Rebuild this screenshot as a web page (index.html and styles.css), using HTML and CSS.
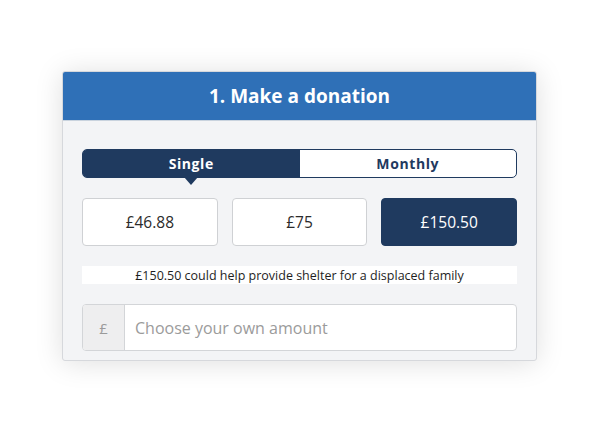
FILE: index.html
```html
<!DOCTYPE html>
<html>
<head>
<meta charset="utf-8">
<link rel="stylesheet" href="styles.css">
</head>
<body>
<div class="card">
  <div class="card-head">1. Make a donation</div>
  <div class="card-body">
    <div class="toggle">
      <div class="tab tab-active">Single</div>
      <div class="tab">Monthly</div>
    </div>
    <div class="amounts">
      <div class="amount">£46.88</div>
      <div class="amount">£75</div>
      <div class="amount amount-active">£150.50</div>
    </div>
    <div class="note">£150.50 could help provide shelter for a displaced family</div>
    <div class="own">
      <div class="own-prefix">£</div>
      <div class="own-field">Choose your own amount</div>
    </div>
  </div>
</div>
</body>
</html>
```
FILE: styles.css
```css
html, body {
  margin: 0;
  padding: 0;
  background: #ffffff;
  width: 600px;
  height: 434px;
  overflow: hidden;
  font-family: "Open Sans", "Liberation Sans", sans-serif;
}
body {
  padding-top: 71px;
  box-sizing: border-box;
}
.card {
  margin-left: 62px;
  width: 475px;
  box-sizing: border-box;
  border: 1px solid #d6d8dc;
  border-radius: 3px;
  background: #f3f4f6;
  box-shadow: 0 2px 28px rgba(0, 0, 0, 0.13);
  overflow: hidden;
}
.card-head {
  height: 48px;
  background: #2f70b7;
  border-bottom: 1px solid #c9d3de;
  color: #ffffff;
  font-weight: 700;
  font-size: 19px;
  display: flex;
  align-items: center;
  justify-content: center;
}
.card-body {
  padding: 28px 19px 9px 19px;
}
.toggle {
  display: flex;
  height: 29px;
  box-sizing: border-box;
  border: 1.5px solid #1f3a5f;
  border-radius: 5px;
  background: #ffffff;
}
.tab {
  flex: 1;
  display: flex;
  align-items: center;
  justify-content: center;
  font-size: 14px;
  font-weight: 700;
  color: #1f3a5f;
  letter-spacing: 0.6px;
  position: relative;
}
.tab-active {
  background: #1f3a5f;
  color: #ffffff;
  border-radius: 3px 0 0 3px;
}
.tab-active::after {
  content: "";
  position: absolute;
  left: 50%;
  margin-left: -7px;
  bottom: -8px;
  border-left: 7px solid transparent;
  border-right: 7px solid transparent;
  border-top: 8px solid #1f3a5f;
}
.amounts {
  display: flex;
  gap: 14px;
  margin-top: 20px;
}
.amount {
  flex: 1;
  height: 48px;
  box-sizing: border-box;
  border: 1px solid #cfd1d4;
  border-radius: 4px;
  background: #ffffff;
  display: flex;
  align-items: center;
  justify-content: center;
  font-size: 15.5px;
  color: #2b2b2b;
}
.amount-active {
  background: #1f3a5f;
  border-color: #1f3a5f;
  color: #ffffff;
}
.note {
  margin-top: 20px;
  height: 18px;
  background: #ffffff;
  display: flex;
  align-items: center;
  justify-content: center;
  font-size: 12.5px;
  color: #1e1e1e;
}
.own {
  margin-top: 20px;
  display: flex;
  height: 47px;
  box-sizing: border-box;
  border: 1px solid #d3d5d8;
  border-radius: 4px;
  background: #ffffff;
  overflow: hidden;
}
.own-prefix {
  width: 41px;
  background: #eeeeef;
  border-right: 1px solid #d3d5d8;
  display: flex;
  align-items: center;
  justify-content: center;
  font-size: 15px;
  color: #9a9a9a;
}
.own-field {
  flex: 1;
  display: flex;
  align-items: center;
  padding-left: 10px;
  font-size: 16px;
  color: #9b9b9b;
}
```
